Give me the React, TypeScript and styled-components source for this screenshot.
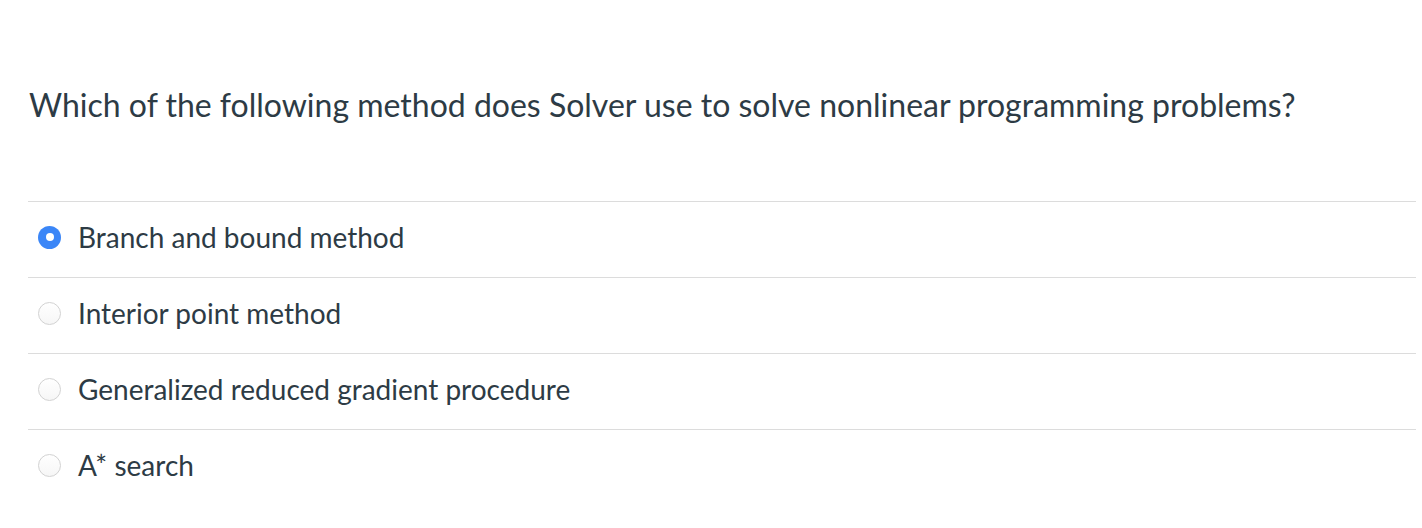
import * as React from "react";
import styled, { createGlobalStyle } from "styled-components";

const Global = createGlobalStyle`
  body {
    margin: 0;
    background: #fff;
    font-family: Lato, "Open Sans", sans-serif;
    color: #2d3b45;
  }
`;

const Page = styled.div`
  padding: 83px 6px 0 28px;
`;

const Question = styled.div`
  font-size: 32px;
  line-height: 44px;
  padding-left: 1px;
  margin-bottom: 74px;
`;

const Answers = styled.div`
  display: flex;
  flex-direction: column;
`;

const Row = styled.label`
  display: flex;
  align-items: center;
  box-sizing: border-box;
  height: 76px;
  border-top: 1.5px solid #dcdcdc;
  gap: 17px;
  padding-left: 10px;
  padding-bottom: 6px;
  font-size: 28px;
`;

const Radio = styled.span<{ checked?: boolean }>`
  width: 23px;
  height: 23px;
  margin-top: 1px;
  border-radius: 50%;
  box-sizing: border-box;
  flex-shrink: 0;
  display: flex;
  align-items: center;
  justify-content: center;
  background: ${(p) =>
    p.checked ? "#3b86f7" : "linear-gradient(#ffffff, #f6f6f6)"};
  border: ${(p) => (p.checked ? "none" : "1px solid #d2d2d2")};
  &::after {
    content: "";
    display: ${(p) => (p.checked ? "block" : "none")};
    width: 8px;
    height: 8px;
    border-radius: 50%;
    background: #fff;
  }
`;

const options = [
  "Branch and bound method",
  "Interior point method",
  "Generalized reduced gradient procedure",
  "A* search",
];

export default function App() {
  return (
    <Page>
      <Global />
      <Question>
        Which of the following method does Solver use to solve nonlinear
        programming problems?
      </Question>
      <Answers>
        {options.map((text, i) => (
          <Row key={i}>
            <Radio checked={i === 0} />
            {text}
          </Row>
        ))}
      </Answers>
    </Page>
  );
}
